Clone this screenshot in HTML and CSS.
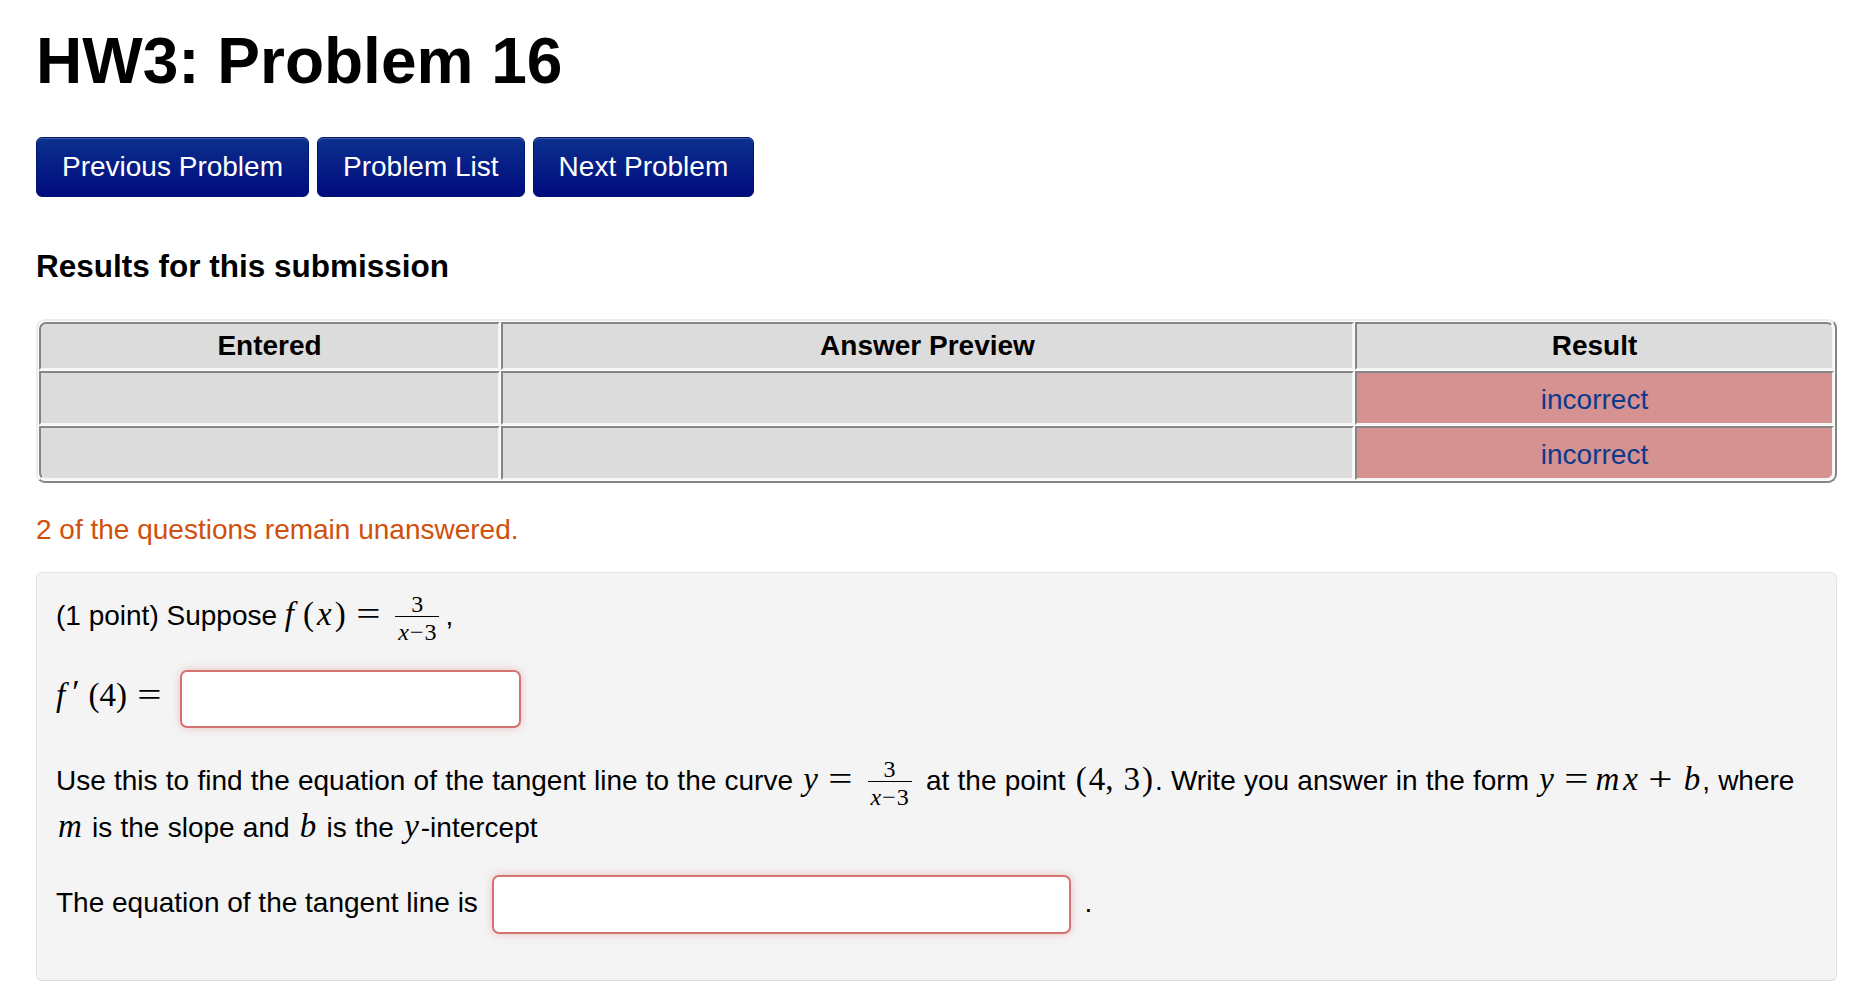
FILE: index.html
```html
<!DOCTYPE html>
<html lang="en">
<head>
<meta charset="utf-8">
<title>HW3: Problem 16</title>
<link rel="stylesheet" href="styles.css">
</head>
<body>
<div class="page">
  <h1 class="title">HW3: Problem 16</h1>
  <nav class="nav">
    <a class="btn">Previous Problem</a>
    <a class="btn">Problem List</a>
    <a class="btn">Next Problem</a>
  </nav>
  <h2 class="results-title">Results for this submission</h2>
  <table class="results">
    <thead>
      <tr><th class="c-entered">Entered</th><th class="c-preview">Answer Preview</th><th class="c-result">Result</th></tr>
    </thead>
    <tbody>
      <tr><td></td><td></td><td class="incorrect">incorrect</td></tr>
      <tr><td></td><td></td><td class="incorrect">incorrect</td></tr>
    </tbody>
  </table>
  <p class="warning">2 of the questions remain unanswered.</p>
  <div class="problem">
    <p class="line l1">(1 point) Suppose <span class="math"><i class="mf">f</i>(<i class="mi mi-x">x</i>)<span class="mo mo-wide">=</span><span class="frac"><span class="num">3</span><span class="den"><i>x</i><span class="minus">−</span>3</span></span></span>,</p>
    <p class="line l2"><span class="math"><i class="mf">f</i><span class="prime">′</span>(4)<span class="mo mo-end">=</span></span> <input class="answer a1" type="text"></p>
    <p class="line l3">Use this to find the equation of the tangent line to the curve <span class="math"><i class="mi">y</i><span class="mo">=</span><span class="frac"><span class="num">3</span><span class="den"><i>x</i><span class="minus">−</span>3</span></span></span> at the point <span class="math"><span class="paren">(</span>4,<span class="thin"></span>3<span class="paren">)</span></span>. Write you answer in the form <span class="math"><i class="mi">y</i><span class="mo mo-tight">=</span><i class="mi">m</i><i class="mi">x</i><span class="mo">+</span><i class="mi">b</i></span>, where <span class="math"><i class="mi">m</i></span> is the slope and <span class="math"><i class="mi">b</i></span> is the <span class="math"><i class="mi">y</i></span>-intercept</p>
    <p class="line l4">The equation of the tangent line is <input class="answer a2" type="text"> .</p>
  </div>
</div>
</body>
</html>
```
FILE: styles.css
```css
html, body {
  margin: 0;
  padding: 0;
  background: #ffffff;
}

body {
  font-family: "Liberation Sans", Arial, Helvetica, sans-serif;
  color: #000;
  font-size: 28px;
  line-height: 32px;
}

.page {
  padding: 0 33px 0 36px;
}

.title {
  margin: 24px 0 0;
  font-size: 64px;
  line-height: 74px;
  font-weight: bold;
}

.nav {
  display: flex;
  gap: 8px;
  margin-top: 39px;
}

.btn {
  display: block;
  box-sizing: border-box;
  height: 60px;
  padding: 13px 25px;
  border: 1px solid #00166e;
  border-radius: 6px;
  background: linear-gradient(to bottom, #0b318e 0%, #061f86 45%, #000c7f 100%);
  box-shadow: inset 0 1px 0 rgba(255, 255, 255, 0.22);
  color: #fff;
  font-size: 28px;
  line-height: 32px;
  text-decoration: none;
  white-space: nowrap;
}

.results-title {
  margin: 51px 0 0;
  font-size: 31.5px;
  line-height: 36px;
  font-weight: bold;
}

.results {
  margin-top: 35px;
  width: 1801px;
  table-layout: fixed;
  border-collapse: separate;
  border-spacing: 1px;
  border: 2px solid;
  border-color: #ececec #858585 #858585 #ececec;
  border-radius: 9px;
  font-size: 28px;
}

.results th,
.results td {
  box-sizing: border-box;
  background: #dcdcdc;
  border: 2px solid;
  border-color: #858585 #f6f6f6 #f6f6f6 #858585;
  text-align: center;
  padding: 0 8px;
}

.results th {
  height: 48px;
  line-height: 33px;
  font-weight: bold;
  padding-bottom: 2px;
}

.results td {
  height: 54px;
  line-height: 31px;
}

.results th:first-child { border-top-left-radius: 7px; }
.results th:last-child { border-top-right-radius: 7px; }
.results tbody tr:last-child td:first-child { border-bottom-left-radius: 7px; }
.results tbody tr:last-child td:last-child { border-bottom-right-radius: 7px; }

.c-entered { width: 461px; }
.c-preview { width: 853px; }

.results td.incorrect {
  background: #d69191;
  color: #0b3a8c;
  padding-top: 2px;
}

.warning {
  margin: 31px 0 0;
  color: #d0500c;
  line-height: 32px;
}

.problem {
  margin-top: 26px;
  background: #f4f4f4;
  border: 1px solid #e3e3e3;
  border-bottom-color: #dcdcdc;
  border-radius: 6px;
  padding: 18px 30px 46px 19px;
}

.line {
  margin: 0;
  line-height: 46px;
}

.l2 { margin-top: 31px; }
.l3 { margin-top: 29px; line-height: 44px; word-spacing: 0.45px; }
.l4 { margin-top: 25px; }

.math {
  font-family: "Liberation Serif", "DejaVu Serif", "Times New Roman", serif;
  font-size: 33px;
  white-space: nowrap;
  word-spacing: 0;
}

.math i {
  font-style: italic;
}

.mi {
  padding: 0 2px;
}

.mi-x {
  padding: 0 3px;
}

.mf {
  margin-right: 9px;
}

.mo {
  display: inline-block;
  transform: scaleX(1.3);
  margin: 0 12px 0 11px;
}

.mo-wide {
  margin-left: 13px;
}

.mo-tight {
  margin-right: 8px;
}

.mo-end {
  margin-left: 13px;
  margin-right: 7px;
}

.paren {
  margin: 0 2px;
}

.thin {
  display: inline-block;
  width: 10px;
}

.prime {
  font-size: 34px;
  line-height: 0;
  vertical-align: 3px;
  margin-left: -2px;
  margin-right: 9px;
}

.frac {
  display: inline-flex;
  flex-direction: column;
  align-items: stretch;
  vertical-align: 13px;
  margin: 0 6px 0 6px;
  font-size: 24px;
  line-height: 18px;
  text-align: center;
}

.frac .num {
  padding: 0 3px 3px;
  border-bottom: 1.5px solid #000;
}

.frac .den {
  padding: 8px 3px 0;
  line-height: 14px;
}

.minus {
  margin: 0 1px;
}

.answer {
  box-sizing: border-box;
  margin: 0 6px;
  padding: 0 8px;
  vertical-align: middle;
  background: #fff;
  border: 2px solid #d47272;
  border-radius: 7px;
  box-shadow: 0 0 9px rgba(214, 100, 100, 0.35);
  font-family: "Liberation Sans", Arial, sans-serif;
  font-size: 28px;
  outline: none;
}

.a1 {
  width: 341px;
  height: 58px;
}

.a2 {
  width: 579px;
  height: 59px;
}
```
